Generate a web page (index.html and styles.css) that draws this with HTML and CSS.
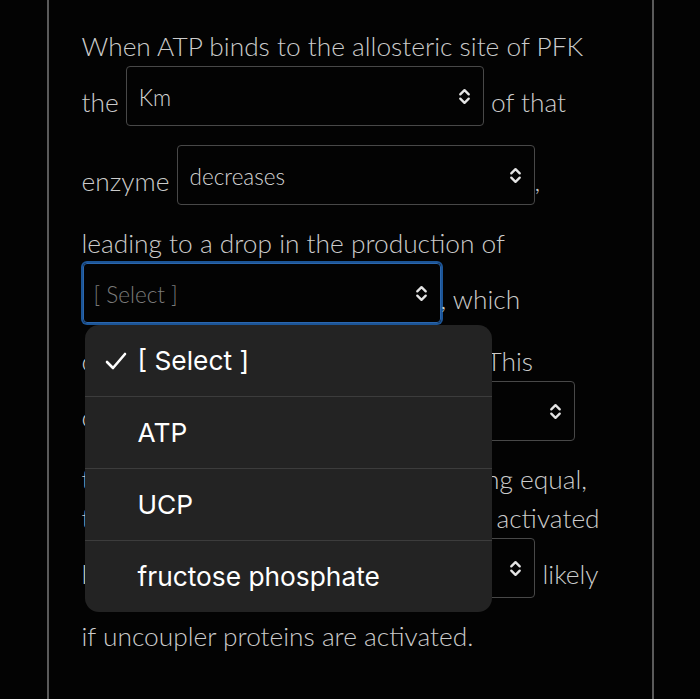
FILE: index.html
```html
<!DOCTYPE html>
<html lang="en">
<head>
<meta charset="UTF-8">
<meta name="viewport" content="width=device-width, initial-scale=1.0">
<title>Glycolysis question</title>
<link rel="stylesheet" href="styles.css">
</head>
<body>

<div class="frame">
    <p class="question">
        When ATP binds to the allosteric site of PFK the
        <span class="select"><span class="value">Km</span><svg class="chev" viewBox="0 0 12 18"><path d="M2 7 L6 3 L10 7 M2 11 L6 15 L10 11"/></svg></span>
        of that enzyme
        <span class="select"><span class="value">decreases</span><svg class="chev" viewBox="0 0 12 18"><path d="M2 7 L6 3 L10 7 M2 11 L6 15 L10 11"/></svg></span>,
        leading to a drop in the production of
        <span class="select focused"><span class="value placeholder">[ Select ]</span><svg class="chev" viewBox="0 0 12 18"><path d="M2 7 L6 3 L10 7 M2 11 L6 15 L10 11"/></svg></span>, which
        consequently slow down glycolysis. This
        creates a(n)
        <span class="select"><span class="value placeholder">[ Select ]</span><svg class="chev" viewBox="0 0 12 18"><path d="M2 7 L6 3 L10 7 M2 11 L6 15 L10 11"/></svg></span>
        then, with all of the other things being equal,
        the more the uncoupler proteins are activated
        leads to
        <span class="select"><span class="value placeholder">[ Select ]</span><svg class="chev" viewBox="0 0 12 18"><path d="M2 7 L6 3 L10 7 M2 11 L6 15 L10 11"/></svg></span>
        likely if uncoupler proteins are activated.
    </p>

    <!-- open picker of the focused select -->
    <ul class="menu">
        <li class="checked"><svg class="tick" viewBox="0 0 22 20"><path d="M2 11 L8 17 L20 3"/></svg>[ Select ]</li>
        <li>ATP</li>
        <li>UCP</li>
        <li>fructose phosphate</li>
    </ul>
</div>

</body>
</html>
```

FILE: styles.css
```css
body {
    margin: 0;
    padding: 0;
    background-color: #030303;
    font-family: Lato, "Open Sans", sans-serif;
}
.frame {
    position: relative;
    box-sizing: border-box;
    width: 607px;
    min-height: 699px;
    margin: 0 auto;
    border-left: 2px solid #5a5a5a;
    border-right: 2px solid #5a5a5a;
    padding: 27px 46px 0 33px;
}
.question {
    margin: 0;
    font-size: 26.3px;
    font-weight: 300;
    line-height: 39px;
    color: #cbcbcb;
}

/* select look-alike */
.select {
    display: inline-flex;
    align-items: center;
    justify-content: space-between;
    box-sizing: border-box;
    width: 358px;
    height: 60px;
    padding: 0 12px 0 12px;
    margin: 0 0 19px 0;
    border: 1px solid #484848;
    border-radius: 4px;
    vertical-align: 6px;
    font-size: 22.5px;
    line-height: 26px;
    color: #d4d4d4;
}
.select .value {
    margin-top: 4px;
}
.select .placeholder {
    color: #7a7a7a;
}
.select.focused {
    border: 1px solid #2b66ad;
    box-shadow: 0 0 0 2px #1c5597;
    margin-left: 1px;
    padding-left: 10px;
}
.chev {
    width: 13px;
    height: 19px;
    fill: none;
    stroke: #e4e4e4;
    stroke-width: 2.2;
    stroke-linecap: round;
    stroke-linejoin: round;
}

/* native picker popup */
.menu {
    position: absolute;
    left: 36px;
    top: 325px;
    width: 407px;
    margin: 0;
    padding: 0;
    list-style: none;
    background-color: #232323;
    border-radius: 14px;
    overflow: hidden;
    font-family: Inter, Roboto, sans-serif;
    font-size: 26.3px;
    color: #ffffff;
}
.menu li {
    display: flex;
    align-items: center;
    height: 71px;
    padding-left: 53px;
    border-top: 1px solid #3c3c3c;
    position: relative;
}
.menu li:first-child {
    border-top: none;
}
.tick {
    position: absolute;
    left: 20px;
    top: 26px;
    width: 22px;
    height: 20px;
    fill: none;
    stroke: #ffffff;
    stroke-width: 2.6;
    stroke-linecap: round;
    stroke-linejoin: round;
}
```
